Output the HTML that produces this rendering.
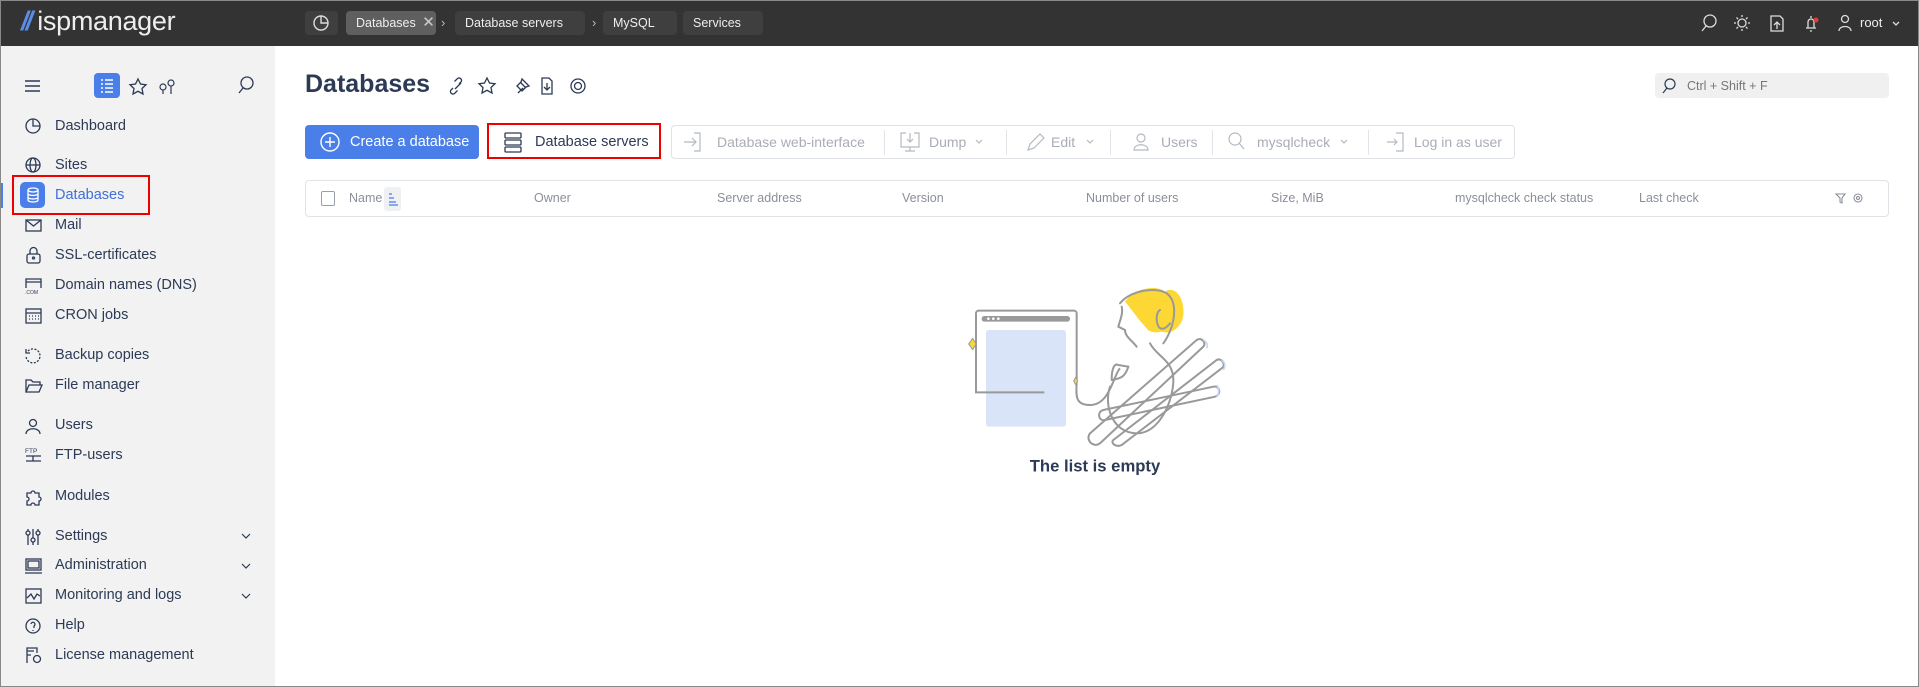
<!DOCTYPE html>
<html><head><meta charset="utf-8"><style>
*{box-sizing:border-box;margin:0;padding:0}
body{width:1919px;height:687px;overflow:hidden;font-family:"Liberation Sans",sans-serif;background:#fff;position:relative;color:#2c3a55}
.abs{position:absolute}
#top{left:0;top:0;width:1919px;height:46px;background:#333}
.crumb{position:absolute;top:11px;height:24px;background:#3f3f3f;border-radius:4px;color:#eee;font-size:12.5px;line-height:24px;padding-left:10px}
.sep{position:absolute;top:11px;color:#bbb;font-size:13px;line-height:24px}
#side{left:0;top:46px;width:275px;height:641px;background:#f2f2f2}
.mi{position:absolute;left:55px;font-size:14.5px;color:#2c3a55;line-height:18px}
.th{position:absolute;top:191px;font-size:12.5px;color:#8a8f99}
.bt{position:absolute;top:134px;font-size:14px;color:#a9adb5}
.vs{position:absolute;top:130px;width:1px;height:25px;background:#e2e4e8}
</style></head><body>
<div class="abs" style="left:0;top:0;width:1919px;height:687px;border:1px solid #888;z-index:9;pointer-events:none"></div>
<div id="top" class="abs"></div>
<div class="abs" style="left:21px;top:6px;font-size:27px;color:#eee;letter-spacing:-0.3px"><span style="color:#5b8de8;font-style:italic;font-weight:bold;letter-spacing:-3px">//</span> ispmanager</div>
<div class="crumb" style="left:305px;width:33px;padding:0"><svg width="33" height="24" viewBox="0 0 33 24"><circle cx="16" cy="12" r="7" fill="none" stroke="#ddd" stroke-width="1.4"/><path d="M16 5v7h7" fill="none" stroke="#ddd" stroke-width="1.4"/></svg></div>
<div class="crumb" style="left:346px;width:90px;background:#5f5f5f">Databases <span style="font-size:15px;color:#ccc;margin-left:3px">✕</span></div>
<div class="sep" style="left:441px">›</div>
<div class="crumb" style="left:455px;width:130px">Database servers</div>
<div class="sep" style="left:592px">›</div>
<div class="crumb" style="left:603px;width:74px">MySQL</div>
<div class="crumb" style="left:683px;width:80px">Services</div>
<svg class="abs" style="left:1698px;top:12px" width="210" height="22" viewBox="0 0 210 22">
<g fill="none" stroke="#ddd" stroke-width="1.3">
<circle cx="12" cy="9" r="6"/><path d="M8 14l-4 5"/>
<circle cx="44" cy="11" r="4"/><path d="M44 3v2M44 17v2M36 11h2M50 11h2M38.5 5.5l1.5 1.5M48 15l1.5 1.5M38.5 16.5l1.5-1.5M48 7l1.5-1.5"/>
<path d="M73 4h9l3 3v12h-12zM79 17v-7M76 13l3-3 3 3"/>
<path d="M108 16h10M110 16v-6a3 3 0 0 1 6 0v6M112 19h2M113 4v2"/>
<circle cx="147" cy="7" r="3.5"/><path d="M141 19c0-6 12-6 12 0"/>
<path d="M195 10l3 3 3-3"/></g>
<circle cx="118" cy="8" r="2.5" fill="#e53935"/>
<text x="162" y="15" fill="#eee" font-size="13" font-family="Liberation Sans">root</text>
</svg>

<div id="side" class="abs"></div>
<svg class="abs" style="left:20px;top:72px" width="240" height="28" viewBox="0 0 240 28">
<path d="M5 9h15M5 14h15M5 19h15" stroke="#2c3a55" stroke-width="1.4"/>
<rect x="74" y="1" width="26" height="25" rx="4" fill="#4a7ee8"/>
<path d="M81 8h2M85 8h8M81 12h2M85 12h8M81 16h2M85 16h8M81 20h2M85 20h8" stroke="#fff" stroke-width="1.4"/>
<path d="M118 7l2.5 5 5.5.7-4 3.8 1 5.5-5-2.7-5 2.7 1-5.5-4-3.8 5.5-.7z" fill="none" stroke="#2c3a55" stroke-width="1.3"/>
<g fill="none" stroke="#2c3a55" stroke-width="1.2"><circle cx="143" cy="15" r="3"/><circle cx="151" cy="11" r="3"/><path d="M143 18v4M151 14v8"/></g>
<circle cx="227" cy="11" r="6" fill="none" stroke="#2c3a55" stroke-width="1.3"/><path d="M223 16l-4 5" stroke="#2c3a55" stroke-width="1.3"/>
</svg>
<div class="abs" style="left:0;top:183px;width:3px;height:25px;background:#4a7ee8"></div>
<div class="abs" style="left:20px;top:182px;width:25px;height:26px;background:#4a7ee8;border-radius:5px"></div>
<svg class="abs" style="left:24px;top:186px" width="18" height="18" viewBox="0 0 18 18" fill="none" stroke="#fff" stroke-width="1.3"><ellipse cx="9" cy="4" rx="5" ry="2"/><path d="M4 4v10c0 2.6 10 2.6 10 0V4M4 7.5c0 2.6 10 2.6 10 0M4 11c0 2.6 10 2.6 10 0"/></svg>
<div class="abs" style="left:12px;top:175px;width:138px;height:40px;border:2px solid #e00;z-index:5"></div>

<svg class="abs" style="left:24px;top:117px" width="20" height="560" viewBox="0 0 20 560" fill="none" stroke="#2c3a55" stroke-width="1.3">
<circle cx="9" cy="9" r="7"/><path d="M9 2v7h7"/>
<g transform="translate(0,39)"><circle cx="9" cy="9" r="7"/><ellipse cx="9" cy="9" rx="3" ry="7"/><path d="M2 9h14"/></g>
<g transform="translate(0,99)"><rect x="2" y="4" width="15" height="11"/><path d="M2 4l7.5 6 7.5-6"/></g>
<g transform="translate(0,129)"><rect x="3" y="8" width="13" height="9" rx="2"/><path d="M6 8V5a3.5 3.5 0 0 1 7 0v3"/><circle cx="9.5" cy="12" r="1"/></g>
<g transform="translate(0,159)"><path d="M2 12V3h15v9M2 6h15"/><text x="1" y="18" font-size="5" fill="#2c3a55" stroke="none">.COM</text></g>
<g transform="translate(0,189)"><rect x="2" y="3" width="15" height="14"/><path d="M2 7h15M5 10h1M8 10h1M11 10h1M14 10h1M5 13h1M8 13h1M11 13h1M14 13h1"/></g>
<g transform="translate(0,229)"><path d="M4 5a7 7 0 1 1-2 5" stroke-dasharray="2 1.5"/><path d="M2 3v4h4"/></g>
<g transform="translate(0,259)"><path d="M2 16V4h5l2 2h7v3M2 16l3-7h13l-3 7z"/></g>
<g transform="translate(0,300)"><circle cx="9" cy="6" r="3.5"/><path d="M2 17c0-7 14-7 14 0"/></g>
<g transform="translate(0,329)"><text x="1" y="7" font-size="6.5" fill="#2c3a55" stroke="none">FTP</text><path d="M2 10h15M2 15h15M9 10v5"/></g>
<g transform="translate(0,370)"><path d="M3 6h4a2 2 0 1 1 4 0h4v4a2 2 0 1 1 0 4v4H11a2 2 0 1 0-4 0H3v-4a2 2 0 1 0 0-4z"/></g>
<g transform="translate(0,410)"><path d="M4 2v16M9 2v16M14 2v16"/><circle cx="4" cy="6" r="2" fill="#f2f2f2"/><circle cx="9" cy="13" r="2" fill="#f2f2f2"/><circle cx="14" cy="6" r="2" fill="#f2f2f2"/></g>
<g transform="translate(0,439)"><rect x="2" y="3" width="15" height="11"/><rect x="4" y="5" width="11" height="7"/><path d="M1 17h17"/></g>
<g transform="translate(0,469)"><rect x="2" y="3" width="15" height="14"/><path d="M3 12l4-4 3 5 3-5 3 2"/></g>
<g transform="translate(0,499)"><circle cx="9" cy="10" r="7"/><path d="M7 8a2 2 0 1 1 3 2v2M9 14v1"/></g>
<g transform="translate(0,529)"><path d="M3 17V2h10v5M3 5h7M3 9h4"/><circle cx="13" cy="13" r="3.5"/></g>
</svg>
<div class="mi" style="top:117px">Dashboard</div>
<div class="mi" style="top:156px">Sites</div>
<div class="mi" style="top:186px;color:#3f6fd8">Databases</div>
<div class="mi" style="top:216px">Mail</div>
<div class="mi" style="top:246px">SSL-certificates</div>
<div class="mi" style="top:276px">Domain names (DNS)</div>
<div class="mi" style="top:306px">CRON jobs</div>
<div class="mi" style="top:346px">Backup copies</div>
<div class="mi" style="top:376px">File manager</div>
<div class="mi" style="top:416px">Users</div>
<div class="mi" style="top:446px">FTP-users</div>
<div class="mi" style="top:487px">Modules</div>
<div class="mi" style="top:527px">Settings</div>
<div class="mi" style="top:556px">Administration</div>
<div class="mi" style="top:586px">Monitoring and logs</div>
<div class="mi" style="top:616px">Help</div>
<div class="mi" style="top:646px">License management</div>
<svg class="abs" style="left:240px;top:530px" width="12" height="70" viewBox="0 0 12 70" fill="none" stroke="#2c3a55" stroke-width="1.2"><path d="M2 4l4 4 4-4M2 34l4 4 4-4M2 64l4 4 4-4"/></svg>

<div class="abs" style="left:305px;top:70px;font-size:25px;font-weight:bold;color:#2c3a55">Databases</div>
<svg class="abs" style="left:448px;top:76px" width="142" height="20" viewBox="0 0 142 20" fill="none" stroke="#2c3a55" stroke-width="1.3">
<path d="M5 12l-2 2a2.5 2.5 0 0 0 3.5 3.5l3-3M11 8l2-2a2.5 2.5 0 0 0-3.5-3.5l-3 3M7 13l6-6"/>
<path d="M39 2l2.5 5 5.5.7-4 3.8 1 5.5-5-2.7-5 2.7 1-5.5-4-3.8 5.5-.7z"/>
<path d="M70 17l5-5M72 6l6 6M74 3l7 7-3 1-4 4-5-5 4-4z"/>
<path d="M94 2h7l3 3v13h-10zM99 7v7M96 11l3 3 3-3"/>
<circle cx="130" cy="10" r="7"/><circle cx="130" cy="10" r="3.5"/>
</svg>
<div class="abs" style="left:1655px;top:73px;width:234px;height:25px;background:#f0f0f0;border-radius:4px"></div>
<svg class="abs" style="left:1660px;top:77px" width="18" height="18" viewBox="0 0 18 18" fill="none" stroke="#2c3a55" stroke-width="1.2"><circle cx="10" cy="7" r="5"/><path d="M7 11l-4 5"/></svg>
<div class="abs" style="left:1687px;top:79px;font-size:12.5px;color:#777">Ctrl + Shift + F</div>

<div class="abs" style="left:305px;top:125px;width:174px;height:34px;background:#4a7ee8;border-radius:4px"></div>
<svg class="abs" style="left:319px;top:131px" width="22" height="22" viewBox="0 0 22 22" fill="none" stroke="#fff" stroke-width="1.4"><circle cx="11" cy="11" r="9"/><path d="M11 6v10M6 11h10"/></svg>
<div class="abs" style="left:350px;top:134px;font-size:14.5px;color:#fff">Create a database</div>
<div class="abs" style="left:487px;top:123px;width:174px;height:36px;border:2px solid #e00"></div>
<svg class="abs" style="left:503px;top:131px" width="20" height="22" viewBox="0 0 20 22" fill="none" stroke="#2c3a55" stroke-width="1.3"><rect x="2" y="2" width="16" height="5" rx="1"/><rect x="2" y="9" width="16" height="5" rx="1"/><rect x="2" y="16" width="16" height="5" rx="1"/></svg>
<div class="abs" style="left:535px;top:134px;font-size:14.5px;color:#2c3a55">Database servers</div>
<div class="abs" style="left:671px;top:125px;width:844px;height:34px;border:1px solid #dfe2e6;border-radius:4px"></div>
<div class="vs" style="left:884px"></div><div class="vs" style="left:1006px"></div><div class="vs" style="left:1110px"></div><div class="vs" style="left:1212px"></div><div class="vs" style="left:1368px"></div>
<svg class="abs" style="left:682px;top:129px" width="830" height="26" viewBox="0 0 830 26" fill="none" stroke="#b5b9c0" stroke-width="1.2">
<path d="M12 4h6v18h-6M2 13h12M10 9l4 4-4 4"/>
<path d="M224 4h-5v14h18V4h-5M228 4v9M225 10l3 3 3-3M228 18v4M223 22h10"/>
<path d="M294 11l3 3 3-3"/>
<path d="M346 21l2-6 10-10 4 4-10 10z"/>
<path d="M405 11l3 3 3-3"/>
<circle cx="459" cy="9" r="4"/><path d="M452 21c0-7 14-7 14 0z"/>
<circle cx="553" cy="10" r="6"/><path d="M557 14l5 6"/>
<path d="M659 11l3 3 3-3"/>
<path d="M705 13h10M712 10l3 3-3 3M714 4h7v18h-7"/>
</svg>
<div class="bt" style="left:717px">Database web-interface</div>
<div class="bt" style="left:929px">Dump</div>
<div class="bt" style="left:1051px">Edit</div>
<div class="bt" style="left:1161px">Users</div>
<div class="bt" style="left:1257px">mysqlcheck</div>
<div class="bt" style="left:1414px">Log in as user</div>

<div class="abs" style="left:305px;top:180px;width:1584px;height:37px;border:1px solid #dfe2e6;border-radius:4px"></div>
<div class="abs" style="left:321px;top:191px;width:14px;height:15px;border:1.3px solid #9aa0a8;border-radius:2px"></div>
<div class="abs" style="left:384px;top:187px;width:17px;height:24px;background:#eef0f3;border-radius:3px"></div>
<svg class="abs" style="left:386px;top:191px" width="14" height="16" viewBox="0 0 14 16" stroke="#4a7ee8" stroke-width="1.2"><path d="M3 3h3M3 7h5M3 11h7M3 14h9"/></svg>
<div class="th" style="left:349px">Name</div>
<div class="th" style="left:534px">Owner</div>
<div class="th" style="left:717px">Server address</div>
<div class="th" style="left:902px">Version</div>
<div class="th" style="left:1086px">Number of users</div>
<div class="th" style="left:1271px">Size, MiB</div>
<div class="th" style="left:1455px">mysqlcheck check status</div>
<div class="th" style="left:1639px">Last check</div>
<svg class="abs" style="left:1834px;top:191px" width="34" height="14" viewBox="0 0 34 14" fill="none" stroke="#8a8f99" stroke-width="1.1"><path d="M2 3h9l-3 4v5l-2-1V7z"/><circle cx="24" cy="7" r="4"/><circle cx="24" cy="7" r="1.5"/></svg>

<svg class="abs" style="left:930px;top:270px" width="330" height="220" viewBox="0 0 990 660">
<rect x="168" y="180" width="240" height="290" rx="8" fill="#dae4f9"/>
<path d="M343 367H138V130a8 8 0 0 1 8-8h286a8 8 0 0 1 8 8v200c0 40-10 75 40 75 60 0 70-90 90-110" fill="none" stroke="#999" stroke-width="6"/>
<rect x="155" y="138" width="265" height="17" rx="8" fill="#999"/>
<circle cx="175" cy="146" r="4" fill="#fff"/><circle cx="190" cy="146" r="4" fill="#fff"/><circle cx="205" cy="146" r="4" fill="#fff"/>
<path d="M128 205l10 17-10 17-12-17z" fill="#fdd835" stroke="#999" stroke-width="3"/>
<path d="M437 322l6 11-6 11-6-11z" fill="#fdd835" stroke="#999" stroke-width="3"/>
<path d="M585 95c30-45 100-50 120-30 30-20 60 20 55 70-5 40-40 60-65 50-20 5-40 0-45-10-20-20-40-50-65-80z" fill="#fdd835"/>
<g fill="none" stroke="#999" stroke-width="6" stroke-linecap="round">
<path d="M570 100c30-40 110-50 140-30 40 30 20 110-10 150M690 120c-20 10-10 90 30 40"/>
<path d="M575 110c5 20-5 40-10 60l20 10c0 20 20 30 35 50"/>
<path d="M660 220c20 40 70 50 70 110 0 60-40 160-110 160-70 0-100-80-80-140"/>
<path d="M545 330c0-40 10-50 20-45l30 5c-10 30-20 35-50 40"/>
<path d="M480 490l320-280c15-10 30 10 20 20L510 520c-20 15-45-10-30-30z"/>
<path d="M550 510l310-240c15-8 30 15 15 25L575 525c-15 8-35-5-25-15z"/>
<path d="M520 420l330-70c20-5 25 25 5 30L525 450c-20 5-25-25-5-30z"/>
</g>
<g fill="none" stroke="#c9d6f3" stroke-width="5"><path d="M820 210c10 5 15 15 10 25M875 270c10 5 12 20 5 30M860 345c8 10 8 25 0 35"/></g>
<text x="495" y="605" text-anchor="middle" font-size="50" font-weight="bold" fill="#2c3a55" font-family="Liberation Sans">The list is empty</text>
</svg>
</body></html>
